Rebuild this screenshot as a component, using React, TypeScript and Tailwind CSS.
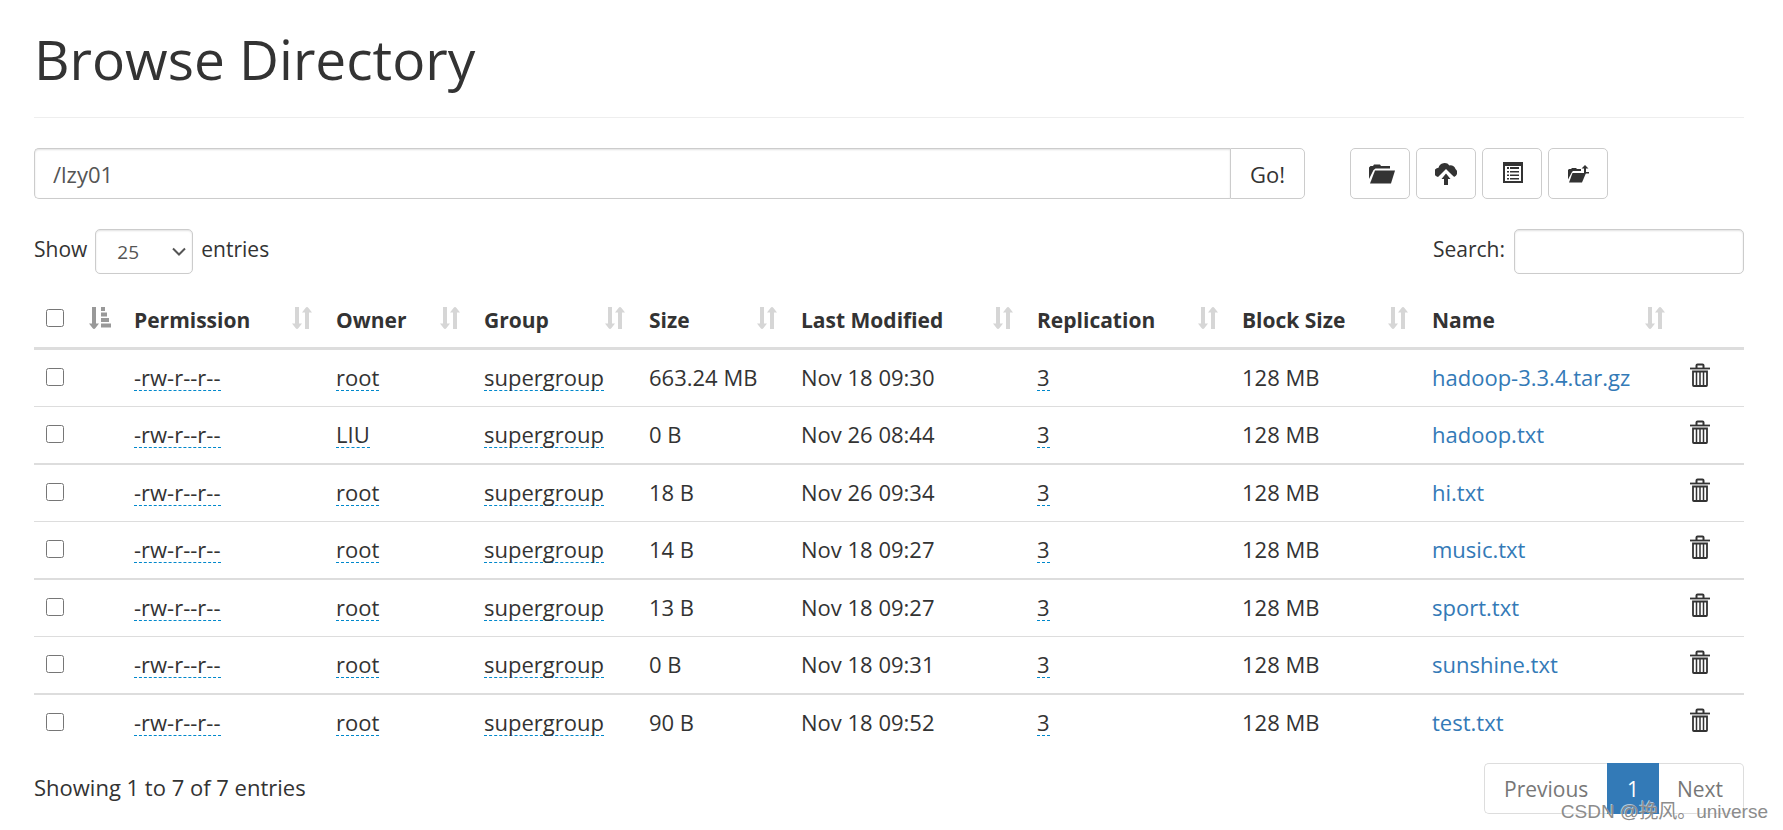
import { useState } from "react";

const FILES = [
  { permission: "-rw-r--r--", owner: "root", group: "supergroup", size: "663.24 MB", modified: "Nov 18 09:30", replication: 3, block: "128 MB", name: "hadoop-3.3.4.tar.gz" },
  { permission: "-rw-r--r--", owner: "LIU", group: "supergroup", size: "0 B", modified: "Nov 26 08:44", replication: 3, block: "128 MB", name: "hadoop.txt" },
  { permission: "-rw-r--r--", owner: "root", group: "supergroup", size: "18 B", modified: "Nov 26 09:34", replication: 3, block: "128 MB", name: "hi.txt" },
  { permission: "-rw-r--r--", owner: "root", group: "supergroup", size: "14 B", modified: "Nov 18 09:27", replication: 3, block: "128 MB", name: "music.txt" },
  { permission: "-rw-r--r--", owner: "root", group: "supergroup", size: "13 B", modified: "Nov 18 09:27", replication: 3, block: "128 MB", name: "sport.txt" },
  { permission: "-rw-r--r--", owner: "root", group: "supergroup", size: "0 B", modified: "Nov 18 09:31", replication: 3, block: "128 MB", name: "sunshine.txt" },
  { permission: "-rw-r--r--", owner: "root", group: "supergroup", size: "90 B", modified: "Nov 18 09:52", replication: 3, block: "128 MB", name: "test.txt" },
];

const COLUMNS = [
  { label: "Permission", width: "w-[202px]" },
  { label: "Owner", width: "w-[148px]" },
  { label: "Group", width: "w-[165px]" },
  { label: "Size", width: "w-[152px]" },
  { label: "Last Modified", width: "w-[236px]" },
  { label: "Replication", width: "w-[205px]" },
  { label: "Block Size", width: "w-[190px]" },
  { label: "Name", width: "w-[257px]" },
];

function SortIcon() {
  return (
    <svg className="mt-[3px]" width="20" height="22" viewBox="0 0 20 22" fill="#d6d6d6" aria-hidden="true">
      <path d="M3 0h4v16.500h3L6.500 21q-1.500 2-3 0L0 16.500h3z" />
      <path d="M13 22h4V5.500h3L16.500 1q-1.500-2-3 0L10 5.500h3z" />
    </svg>
  );
}

function SortAscIcon() {
  return (
    <svg width="22" height="22" viewBox="0 0 22 22" fill="#999" aria-hidden="true">
      <path d="M3 0h4v16.500h3L6.500 21q-1.500 2-3 0L0 16.500h3z" />
      <path d="M12 0h4v4h-4zM12 5.500h6v4h-6zM12 11h8v4h-8zM12 16.500h10v4H12z" />
    </svg>
  );
}

function TrashIcon() {
  return (
    <svg width="20" height="24" viewBox="0 0 20 24" fill="none" stroke="#333" aria-hidden="true">
      <path d="M6.500 5V2.500q0-1 1-1h5q1 0 1 1V5" strokeWidth="2" />
      <path d="M0 5.500h20" strokeWidth="1.800" />
      <path d="M3 8.500h14v13.700q0 .8-.8.8H3.800q-.8 0-.8-.8z" strokeWidth="1.800" />
      <path d="M6.500 8v15M10 8v15M13.500 8v15" strokeWidth="1.500" />
    </svg>
  );
}

function FolderOpenIcon() {
  return (
    <svg width="26" height="20" viewBox="0 0 26 20" fill="#333" aria-hidden="true">
      <path d="M0 15V3.500L1.500 2H4l1-1.500h6L12 2h9v2.500H6.500L4.500 6z" />
      <path d="M6 6.500H26L22 19.500H1z" />
    </svg>
  );
}

function CloudUploadIcon() {
  return (
    <svg width="22" height="22" viewBox="0 0 22 22" fill="#333" aria-hidden="true">
      <path d="M4 14a4.600 4.600 0 0 1-.5-9.200A6.300 6.300 0 0 1 14.500 2.500 5 5 0 0 1 20.500 6a4.600 4.600 0 0 1-1.500 8L11 7z" />
      <path d="M11 10.500l4.500 5.500H13v6H9v-6H6.500z" />
      <path d="M3.500 15L11 7.500 18.500 15" fill="none" stroke="#fff" strokeWidth="2" />
    </svg>
  );
}

function ListIcon() {
  return (
    <svg width="20" height="21" viewBox="0 0 20 21" fill="#333" aria-hidden="true">
      <path fillRule="evenodd" d="M0 0h20v21H0zM2 4v15h16V4z" />
      <path d="M4 5h2v2H4zM7 5h9v2H7zM4 9h2v1.500H4zM7 9h9v1.500H7zM4 12.500h2V14H4zM7 12.500h9V14H7zM4 16h2v1.500H4zM7 16h9v1.500H7z" />
    </svg>
  );
}

function FolderUpIcon() {
  return (
    <svg width="22" height="18" viewBox="0 0 22 18" fill="#333" aria-hidden="true">
      <path d="M0 14.500V5L1 4h2l1-1h4l1 1h4v2H5L4 7z" />
      <path d="M4.500 8H18l-4 9.500H1z" />
      <path d="M17 0l3.500 3.500H18V7h3v1.500h-5v-5h-2.500z" />
    </svg>
  );
}

const ACTIONS = [
  { label: "Create directory", icon: <FolderOpenIcon />, align: "pl-1" },
  { label: "Upload files", icon: <CloudUploadIcon />, align: "" },
  { label: "Cut and paste", icon: <ListIcon />, align: "pl-0.5 pb-0.5" },
  { label: "Parent directory", icon: <FolderUpIcon />, align: "pl-0.5" },
];

const editable = "inline-block border-b border-dashed border-[#0088cc] leading-[26px]";
const field = "border border-[#ccc] bg-white text-[#555] shadow-[inset_0_1px_2px_rgba(0,0,0,0.12)]";

export default function App() {
  const [path, setPath] = useState("/lzy01");
  const [search, setSearch] = useState("");
  const [length, setLength] = useState("25");

  return (
    <main className="relative min-h-screen overflow-hidden bg-white pt-7 pr-[39px] pb-3 pl-[34px] font-['Open_Sans','Noto_Sans',sans-serif] text-[21px] leading-8 text-[#333]">
      <h1 className="border-b border-[#eee] pb-7 text-[55px] leading-[61px]">Browse Directory</h1>

      <div className="mt-[30px] flex">
        <form className="flex flex-1" onSubmit={(e) => e.preventDefault()}>
          <input
            type="text"
            aria-label="Directory path"
            value={path}
            onChange={(e) => setPath(e.target.value)}
            className={`h-[51px] min-w-0 flex-1 rounded-l-[5px] border-r-0 px-[18px] text-[22px] ${field}`}
          />
          <button type="submit" className="h-[51px] w-[75px] rounded-r-[5px] border border-[#ccc] bg-white text-[22px]">Go!</button>
        </form>
        <div className="ml-[45px] flex w-[394px] gap-1.5">
          {ACTIONS.map((action) => (
            <button
              key={action.label}
              type="button"
              aria-label={action.label}
              className={`flex h-[51px] w-[60px] items-center justify-center rounded-[5px] border border-[#ccc] bg-white ${action.align}`}
            >
              {action.icon}
            </button>
          ))}
        </div>
      </div>

      <div className="mt-[30px] flex justify-between">
        <label className="flex items-start gap-2">
          <span className="pt-1">Show</span>
          <span className="relative">
            <select
              value={length}
              onChange={(e) => setLength(e.target.value)}
              className={`h-[45px] w-[98px] appearance-none rounded-[5px] pl-[21px] text-[19px] ${field}`}
            >
              <option>10</option>
              <option>25</option>
              <option>50</option>
              <option>100</option>
            </select>
            <svg className="pointer-events-none absolute top-[18px] right-[7px]" width="14" height="10" viewBox="0 0 14 10" fill="none" stroke="#555" strokeWidth="2" aria-hidden="true">
              <path d="M1 1.500l6 6 6-6" />
            </svg>
          </span>
          <span className="pt-1">entries</span>
        </label>
        <label className="flex items-start gap-[9px]">
          <span className="pt-1">Search:</span>
          <input
            type="search"
            value={search}
            onChange={(e) => setSearch(e.target.value)}
            className={`h-[45px] w-[230px] rounded-[5px] px-4 text-[19px] ${field}`}
          />
        </label>
      </div>

      <table className="mt-[18px] w-full table-fixed border-separate border-spacing-0 text-left whitespace-nowrap">
        <thead>
          <tr className="h-[58px] [&>th]:border-b-[3px] [&>th]:border-[#ddd]">
            <th className="w-[87px] pr-2.5 pb-1 pl-3">
              <div className="flex items-center justify-between">
                <input type="checkbox" aria-label="Select all" className="size-[18px]" />
                <SortAscIcon />
              </div>
            </th>
            {COLUMNS.map((col) => (
              <th key={col.label} className={`pr-[11px] pl-[13px] font-bold ${col.width}`}>
                <div className="flex items-start justify-between">
                  {col.label}
                  <SortIcon />
                </div>
              </th>
            ))}
            <th className="w-[68px]" aria-label="Delete" />
          </tr>
        </thead>
        <tbody className="text-[22px] [&_td]:border-[#ddd] [&>tr:not(:first-child)>td]:border-t [&>tr:nth-child(2n+3)>td]:border-t-2">
          {FILES.map((file) => (
            <tr key={file.name} className="[&>td]:pt-[11px] [&>td]:pb-[13px] [&>td]:pl-[13px]">
              <td className="pl-3!">
                <input type="checkbox" aria-label={`Select ${file.name}`} className="block size-[18px]" />
              </td>
              <td><span className={editable}>{file.permission}</span></td>
              <td><span className={editable}>{file.owner}</span></td>
              <td><span className={editable}>{file.group}</span></td>
              <td>{file.size}</td>
              <td>{file.modified}</td>
              <td><span className={editable}>{file.replication}</span></td>
              <td>{file.block}</td>
              <td><a href="#" className="text-[#337ab7]">{file.name}</a></td>
              <td>
                <button type="button" aria-label={`Delete ${file.name}`} className="block pb-1 pl-px">
                  <TrashIcon />
                </button>
              </td>
            </tr>
          ))}
        </tbody>
      </table>

      <div className="mt-3 flex items-start justify-between">
        <p className="pt-2 text-[22px]">Showing 1 to 7 of 7 entries</p>
        <nav aria-label="Pages" className="flex h-[51px] text-[#777]">
          <a href="#" className="flex w-[123px] items-center rounded-l-[5px] border border-r-0 border-[#ddd] pl-[19px]">Previous</a>
          <a href="#" aria-current="page" className="flex w-[52px] items-center justify-center bg-[#337ab7] text-white">1</a>
          <a href="#" className="flex w-[85px] items-center rounded-r-[5px] border border-l-0 border-[#ddd] pl-[18px]">Next</a>
        </nav>
      </div>

      <div className="pointer-events-none absolute right-[15px] bottom-1 font-['Liberation_Sans','Noto_Sans_CJK_SC',sans-serif] text-[19px] leading-7 text-[#8c8c8c] [text-shadow:-1px_-1px_0_rgba(255,255,255,0.6)]">
        CSDN @挽风。universe
      </div>
    </main>
  );
}
